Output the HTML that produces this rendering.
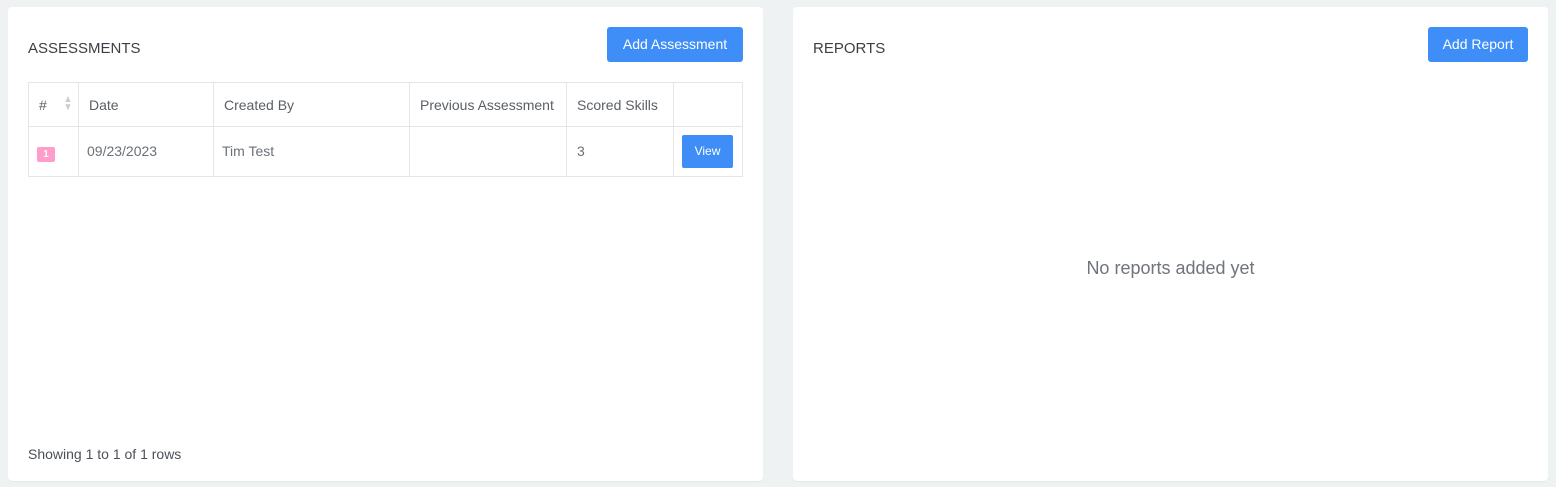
<!DOCTYPE html>
<html><head><meta charset="utf-8"><style>
*{box-sizing:border-box;margin:0;padding:0}
body{width:1556px;height:487px;background:#eff2f3;font-family:"Liberation Sans",sans-serif;position:relative;overflow:hidden}
.card{position:absolute;top:7px;width:755px;height:474px;background:#fff;border-radius:4px;box-shadow:0 1px 1px rgba(0,0,0,.05)}
.title{position:absolute;left:20px;top:33px;font-size:15px;color:#3b3f45}
.btn{position:absolute;background:#3f8ef7;color:#fff;border-radius:3px;font-size:14px;text-align:center}
table{position:absolute;left:20px;top:75px;width:715px;border-collapse:collapse;font-size:14px;color:#5a5f66}
td{border:1px solid #e2e6e8;padding:0 10px;vertical-align:middle}
tr.h td{height:44px;padding-top:1px}
tr.b td{height:50px;color:#6b7178}
.foot{position:absolute;left:20px;top:439px;font-size:14px;color:#4b5058}
</style></head><body>
<div class="card" style="left:8px">
<div class="title">ASSESSMENTS</div>
<div class="btn" style="left:599px;top:20px;width:136px;height:35px;line-height:35px">Add Assessment</div>
<table>
<tr class="h"><td style="width:50px;position:relative">#<span style="position:absolute;left:34px;top:13px;font-size:10px;color:#ccc;line-height:8px;transform:scaleX(0.9)">▲<br>▼</span></td><td style="width:135px">Date</td><td style="width:196px">Created By</td><td style="width:157px">Previous Assessment</td><td style="width:107px">Scored Skills</td><td></td></tr>
<tr class="b"><td style="padding:0 8px"><span style="display:inline-block;background:#ff9ccc;color:#fff;font-size:10px;font-weight:bold;width:18px;height:15px;line-height:15px;text-align:center;border-radius:2px;margin-top:6px">1</span></td><td style="padding-left:8px;vertical-align:top;padding-top:16px">09/23/2023</td><td style="padding-left:8px;vertical-align:top;padding-top:16px">Tim Test</td><td></td><td style="vertical-align:top;padding-top:16px">3</td><td style="padding:0 8px"><div style="background:#3f8ef7;color:#fff;width:51px;height:33px;line-height:33px;text-align:center;border-radius:2px;font-size:12px">View</div></td></tr>
</table>
<div class="foot">Showing 1 to 1 of 1 rows</div>
</div>
<div class="card" style="left:793px">
<div class="title">REPORTS</div>
<div class="btn" style="left:635px;top:20px;width:100px;height:35px;line-height:35px">Add Report</div>
<div style="position:absolute;left:0;width:755px;top:251px;text-align:center;font-size:18px;color:#6f747b">No reports added yet</div>
</div>
</body></html>
